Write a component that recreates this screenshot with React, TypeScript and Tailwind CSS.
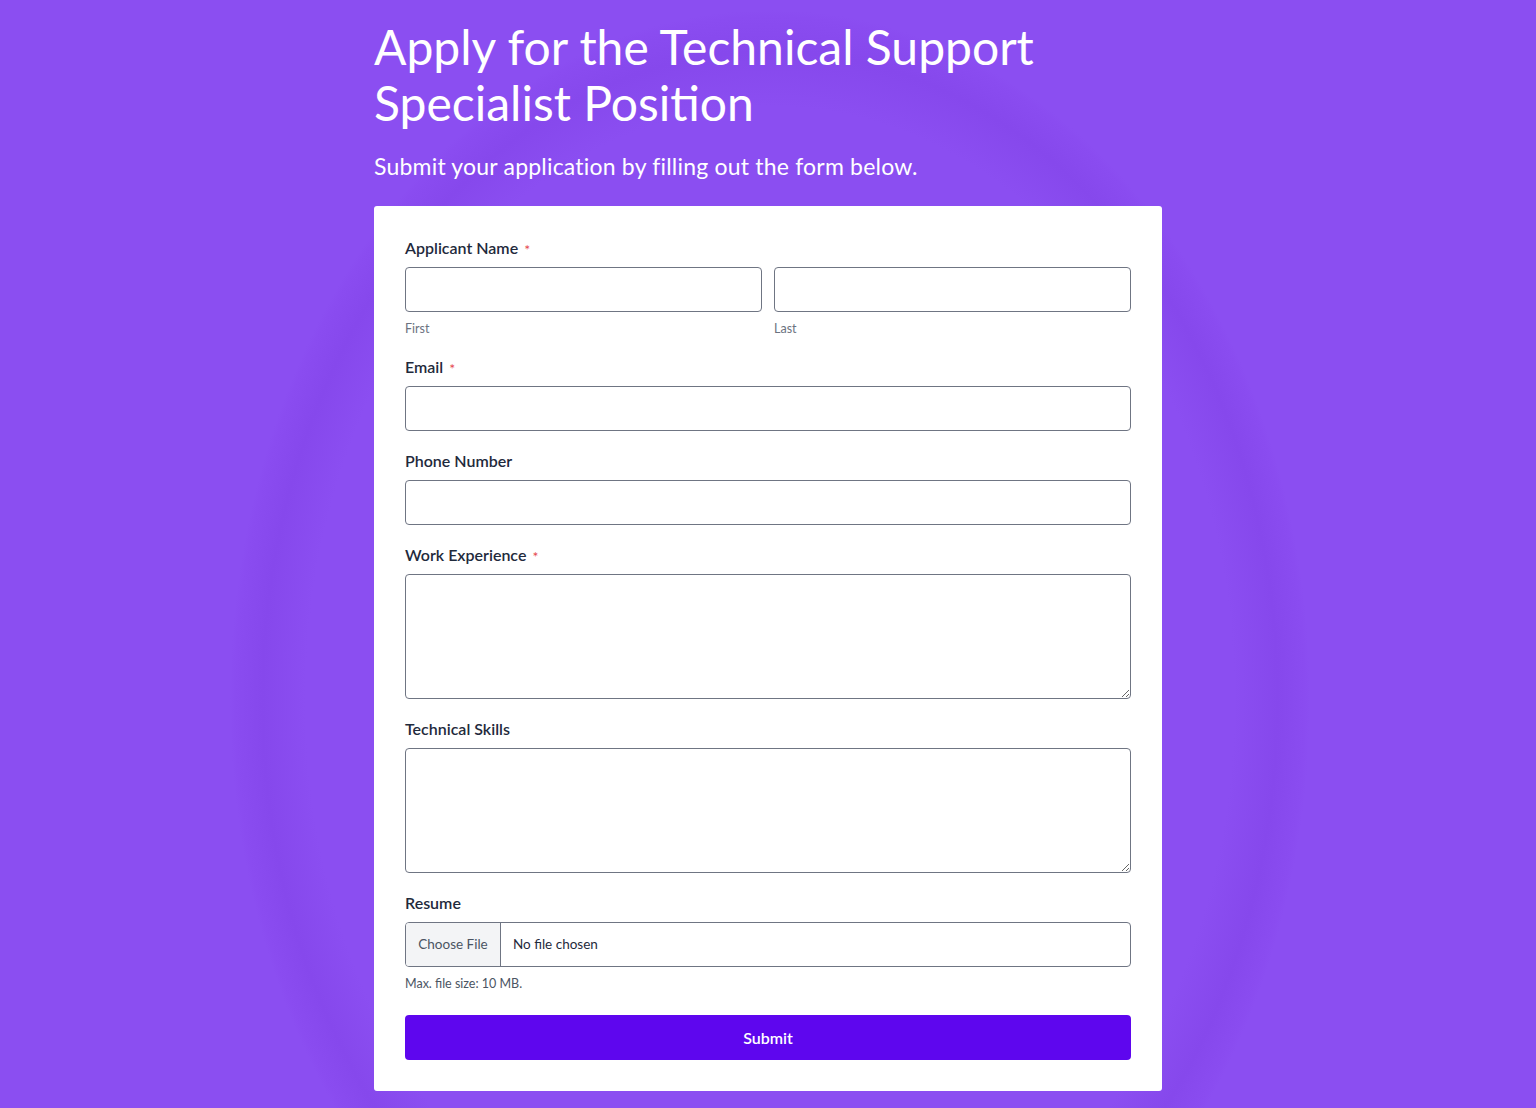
import { useState } from "react";

function Label({ text, required }: { text: string; required?: boolean }) {
  return (
    <label className="mb-[9px] flex items-center text-[16px] font-semibold leading-5 text-[#1f2a3c]">
      {text}
      {required && <span className="ml-[6px] mt-[3px] text-[14px] font-normal leading-none text-[#e5484d]">*</span>}
    </label>
  );
}

const inputCls =
  "h-[45px] w-full rounded-[4px] border border-[#6f7583] bg-white px-3 text-[15px] text-[#1f2a3c] outline-none focus:border-[#5e06ee]";

const textareaCls =
  "block h-[125px] w-full resize-y rounded-[4px] border border-[#6f7583] bg-white px-3 py-2 text-[15px] text-[#1f2a3c] outline-none focus:border-[#5e06ee]";

export default function App() {
  const [fileName, setFileName] = useState("");

  return (
    <div
      className="min-h-screen bg-[#8b4ef1] bg-[radial-gradient(540px_690px_at_770px_700px,#8b4ef1_86%,#8648ec_94%,#8a4cf0_99%,#8b4ef1_100%)] pb-[18px] pt-[19px]"
      style={{ fontFamily: "Lato, 'Noto Sans', sans-serif" }}
    >
      <div className="mx-auto w-[788px]">
        <h1 className="text-[48px] font-normal leading-[56px] text-white">
          Apply for the Technical Support
          <br />
          Specialist Position
        </h1>
        <p className="mt-[20px] text-[23px] leading-[30px] tracking-[0.2px] text-white">
          Submit your application by filling out the form below.
        </p>

        {/* Form card */}
        <form
          className="mt-[25px] flex flex-col gap-[20px] rounded-[3px] bg-white px-[31px] pb-[31px] pt-[32px]"
          onSubmit={(e) => e.preventDefault()}
        >
          <div>
            <Label text="Applicant Name" required />
            <div className="grid grid-cols-2 gap-3">
              <div>
                <input className={inputCls} />
                <p className="mt-[9px] text-[12.5px] leading-4 text-[#6b7280]">First</p>
              </div>
              <div>
                <input className={inputCls} />
                <p className="mt-[9px] text-[12.5px] leading-4 text-[#6b7280]">Last</p>
              </div>
            </div>
          </div>

          <div>
            <Label text="Email" required />
            <input type="email" className={inputCls} />
          </div>

          <div>
            <Label text="Phone Number" />
            <input type="tel" className={inputCls} />
          </div>

          <div>
            <Label text="Work Experience" required />
            <textarea className={textareaCls} />
          </div>

          <div>
            <Label text="Technical Skills" />
            <textarea className={textareaCls} />
          </div>

          <div>
            <Label text="Resume" />
            <label className="flex h-[45px] w-full cursor-pointer items-stretch overflow-hidden rounded-[4px] border border-[#6f7583] bg-white">
              <span className="flex w-[95px] items-center justify-center border-r border-[#6f7583] bg-[#f3f4f6] text-[13.5px] text-[#4b5563]">
                Choose File
              </span>
              <span className="flex items-center px-3 text-[13.5px] text-[#1f2a3c]">
                {fileName || "No file chosen"}
              </span>
              <input
                type="file"
                className="hidden"
                onChange={(e) => setFileName(e.target.files?.[0]?.name || "")}
              />
            </label>
            <p className="mt-[9px] text-[12.5px] leading-4 text-[#4b5563]">Max. file size: 10 MB.</p>
          </div>

          <button
            type="submit"
            className="mt-[3px] h-[45px] w-full rounded-[4px] bg-[#5e06ee] text-[16px] font-semibold text-white"
          >
            Submit
          </button>
        </form>
      </div>
    </div>
  );
}
